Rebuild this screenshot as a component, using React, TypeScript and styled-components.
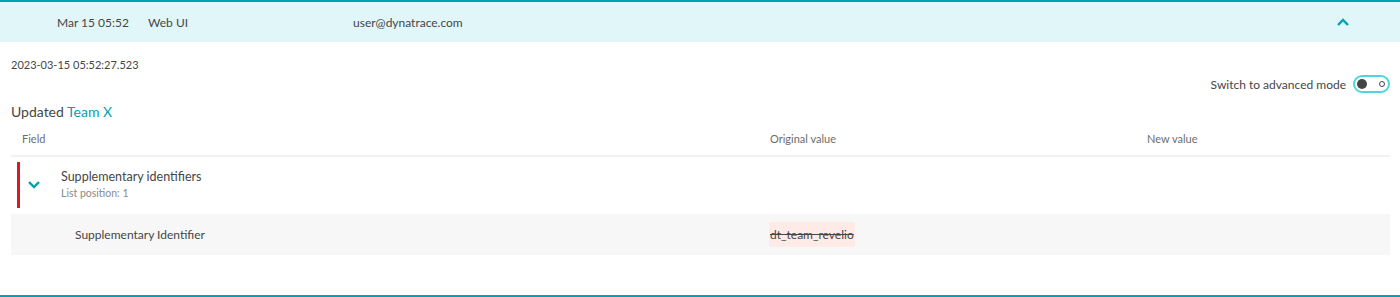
import styled, { createGlobalStyle } from "styled-components";

const GlobalStyle = createGlobalStyle`
    html, body {
        margin: 0;
        padding: 0;
        background: #ffffff;
    }
    body {
        font-family: "Lato", "Noto Sans", sans-serif;
        color: #454646;
    }
`;

const Panel = styled.div`
    width: 1400px;
    height: 297px;
    box-sizing: border-box;
    border-top: 2px solid #00a1b2;
    border-bottom: 2px solid #00a1b2;
    display: flex;
    flex-direction: column;
`;

const Header = styled.div`
    height: 40px;
    background: #e1f6f9;
    display: flex;
    align-items: center;
    padding-left: 57px;
    padding-right: 50px;
    font-size: 12px;
    color: #454646;
`;

const HeaderCell = styled.span<{ $width?: number }>`
    width: ${(p) => (p.$width ? `${p.$width}px` : "auto")};
    flex: ${(p) => (p.$width ? "none" : "1")};
`;

const Body = styled.div`
    padding: 0 10px 0 11px;
    display: flex;
    flex-direction: column;
`;

const Timestamp = styled.div`
    font-size: 11px;
    margin-top: 16px;
    line-height: 14px;
`;

const ModeRow = styled.div`
    display: flex;
    justify-content: flex-end;
    align-items: center;
    gap: 7px;
    margin-top: 3px;
    font-size: 12px;
    height: 18px;
`;

const Toggle = styled.div`
    width: 28px;
    height: 14px;
    border: 2px solid #4fd5e0;
    border-radius: 9px;
    display: flex;
    align-items: center;
    justify-content: space-between;
    padding: 0 3px 0 2px;
    background: #fff;
`;

const Knob = styled.span`
    width: 10px;
    height: 10px;
    border-radius: 50%;
    background: #454646;
`;

const Ring = styled.span`
    width: 4px;
    height: 4px;
    border-radius: 50%;
    border: 1px solid #454646;
`;

const Title = styled.div`
    font-size: 14px;
    margin-top: 10px;
    line-height: 18px;
`;

const Link = styled.span`
    color: #00a1b2;
`;

const Grid = styled.div<{ $first: number }>`
    display: grid;
    grid-template-columns: ${(p) => p.$first}px 377px 1fr;
`;

const HeadRow = styled(Grid)`
    height: 33px;
    margin-top: 1px;
    align-items: center;
    border-bottom: 2px solid #f2f2f2;
    font-size: 11px;
    color: #6d6d6d;
    padding-left: 11px;
`;

const GroupRow = styled.div`
    display: flex;
    align-items: center;
    height: 46px;
    margin: 5px 0 6px 6px;
    border-left: 3px solid #dc172a;
`;

const ChevronBox = styled.div`
    width: 41px;
    display: flex;
    justify-content: center;
    padding-right: 14px;
    box-sizing: border-box;
`;

const GroupText = styled.div`
    display: flex;
    flex-direction: column;
    gap: 3px;
    margin-top: -2px;
`;

const GroupName = styled.span`
    font-size: 12.5px;
`;

const GroupSub = styled.span`
    font-size: 10.5px;
    color: #898989;
`;

const ValueRow = styled(Grid)`
    height: 41px;
    align-items: center;
    background: #f7f7f7;
    font-size: 12px;
`;

const FieldName = styled.span`
    padding-left: 64px;
`;

const Removed = styled.span`
    justify-self: start;
    background: #feebe7;
    text-decoration: line-through;
    padding: 5px 1px;
    font-size: 12px;
`;

function Chevron({ up }: { up?: boolean }) {
    return (
        <svg width="14" height="10" viewBox="0 0 14 10">
            <path
                d={up ? "M2 8 L7 3 L12 8" : "M2 2 L7 7 L12 2"}
                fill="none"
                stroke="#00a1b2"
                strokeWidth="2.4"
            />
        </svg>
    );
}

export default function App() {
    return (
        <>
            <GlobalStyle />
            <Panel>
                <Header>
                    <HeaderCell $width={91}>Mar 15 05:52</HeaderCell>
                    <HeaderCell $width={205}>Web UI</HeaderCell>
                    <HeaderCell>user@dynatrace.com</HeaderCell>
                    <Chevron up />
                </Header>
                <Body>
                    <Timestamp>2023-03-15 05:52:27.523</Timestamp>
                    <ModeRow>
                        Switch to advanced mode
                        <Toggle>
                            <Knob />
                            <Ring />
                        </Toggle>
                    </ModeRow>
                    <Title>
                        Updated <Link>Team X</Link>
                    </Title>
                    <HeadRow $first={748}>
                        <span>Field</span>
                        <span>Original value</span>
                        <span>New value</span>
                    </HeadRow>
                    <GroupRow>
                        <ChevronBox>
                            <Chevron />
                        </ChevronBox>
                        <GroupText>
                            <GroupName>Supplementary identifiers</GroupName>
                            <GroupSub>List position: 1</GroupSub>
                        </GroupText>
                    </GroupRow>
                    <ValueRow $first={758}>
                        <FieldName>Supplementary Identifier</FieldName>
                        <Removed>dt_team_revelio</Removed>
                        <span />
                    </ValueRow>
                </Body>
            </Panel>
        </>
    );
}
